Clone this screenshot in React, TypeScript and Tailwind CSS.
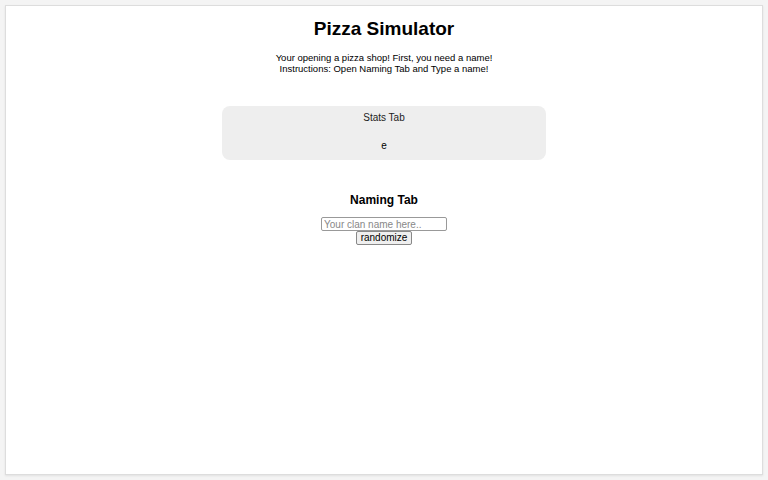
import { useState } from 'react'

export default function App() {
  const [name, setName] = useState('')

  return (
    <div className="min-h-screen bg-[#f4f4f4] p-[5px] font-['Liberation_Sans',Arial,sans-serif] text-black">
      <div className="h-[470px] border border-[#dddddd] bg-white flex flex-col items-center shadow-[0_1px_2px_rgba(0,0,0,0.08)]">
        <h1 className="mt-[9px] text-[19px] font-bold leading-[28px]">Pizza Simulator</h1>
        <p className="mt-[9px] text-[9.5px] leading-[11px] text-center">
          Your opening a pizza shop! First, you need a name!
          <br />
          Instructions: Open Naming Tab and Type a name!
        </p>

        <div className="mt-[32px] w-[324px] h-[54px] rounded-[8px] bg-[#eeeeee] flex flex-col items-center">
          <span className="mt-[6px] text-[10px] leading-[12px] text-[#222]">Stats Tab</span>
          <span className="mt-[16px] text-[10px] leading-[12px]">e</span>
        </div>

        <h2 className="mt-[32px] text-[12px] font-bold leading-[16px]">Naming Tab</h2>
        <input
          value={name}
          onChange={(e) => setName(e.target.value)}
          placeholder="Your clan name here.."
          className="mt-[9px] w-[126px] h-[14px] border border-[#999] rounded-[2px] px-[2px] text-[10px] leading-[12px] placeholder:text-[#888] outline-none"
        />
        <button className="h-[14px] px-[4px] border border-[#888] rounded-[2px] bg-[#efefef] text-[10px] leading-[12px]">
          randomize
        </button>
      </div>
    </div>
  )
}
